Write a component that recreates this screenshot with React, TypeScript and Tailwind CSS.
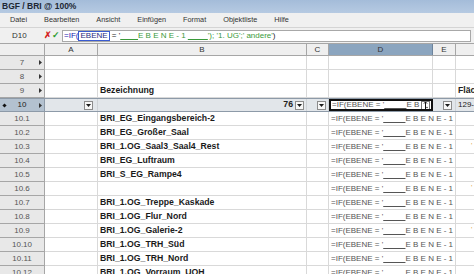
import React from 'react';

type Row = {
  id: string;
  name?: string;
  arrow?: boolean;
  formula?: boolean;
  f?: string;
  fBold?: boolean;
  mark?: boolean;
};

const rows: Row[] = [
  { id: '7', arrow: true },
  { id: '8', arrow: true },
  { id: '9', arrow: true, name: 'Bezeichnung', f: 'Fläc', fBold: true },
  { id: '10.1', name: 'BRI_EG_Eingangsbereich-2', formula: true },
  { id: '10.2', name: 'BRI_EG_Großer_Saal', formula: true },
  { id: '10.3', name: 'BRI_1.OG_Saal3_Saal4_Rest', formula: true, mark: true },
  { id: '10.4', name: 'BRI_EG_Luftraum', formula: true },
  { id: '10.5', name: 'BRI_S_EG_Rampe4', formula: true },
  { id: '10.6', formula: true, mark: true },
  { id: '10.7', name: 'BRI_1.OG_Treppe_Kaskade', formula: true },
  { id: '10.8', name: 'BRI_1.OG_Flur_Nord', formula: true },
  { id: '10.9', name: 'BRI_1.OG_Galerie-2', formula: true, mark: true },
  { id: '10.10', name: 'BRI_1.OG_TRH_Süd', formula: true },
  { id: '10.11', name: 'BRI_1.OG_TRH_Nord', formula: true },
  { id: '10.12', name: 'BRI_1.OG_Vorraum_UOH', formula: true },
];

const menu = ['Datei', 'Bearbeiten', 'Ansicht', 'Einfügen', 'Format', 'Objektliste', 'Hilfe'];

// little combo button used in the filter row
const Drop = () => (
  <span className="flex h-[9px] w-[9px] shrink-0 items-center justify-center border border-[#8c8c8c] bg-[#f7f7f7]">
    <svg width="5" height="3" viewBox="0 0 5 3">
      <path d="M0 0h5L2.5 3z" fill="#1a1a1a" />
    </svg>
  </span>
);

const Arrow = () => (
  <svg width="3" height="5" viewBox="0 0 3 5" className="absolute right-[2px] top-[4px]">
    <path d="M0 0l3 2.5L0 5z" fill="#333" />
  </svg>
);

const FormulaCell = () => (
  <span className="whitespace-pre text-[#555]">
    =IF(EBENE = '<span className="underline decoration-[#555]">{'          '}</span>E B E N E - 1
  </span>
);

export default function App() {
  return (
    <div className="h-[274px] w-[474px] overflow-hidden bg-white font-['Liberation_Sans',Arial,sans-serif] text-[8px] text-[#222]">
      {/* title bar */}
      <div className="flex h-[13px] items-center bg-gradient-to-b from-[#a4bcd9] to-[#b6cae2] pl-[2px] text-[8.5px] font-bold text-[#1d2733]">
        BGF / BRI @ 100%
      </div>

      {/* menu */}
      <div className="flex h-[15px] items-center gap-[17px] border-b border-[#d4d4d4] bg-[#f0f0f0] pl-[10px] text-[7.3px] text-[#333]">
        {menu.map((m) => (
          <span key={m}>{m}</span>
        ))}
      </div>

      {/* formula bar */}
      <div className="flex h-[15px] items-center bg-[#f0f0f0]">
        <span className="w-[44px] pl-[12px] text-[#333]">D10</span>
        <span className="w-[8px] text-[9px] font-bold leading-none text-[#d42020]">✗</span>
        <span className="w-[10px] text-[9px] font-bold leading-none text-[#2c9a2c]">✓</span>
        <div className="mr-[3px] flex h-[12px] flex-1 items-center overflow-hidden whitespace-pre border border-[#a8a8a8] bg-white pl-[1px] text-[8px]">
          <span className="text-[#2323b0]">=IF(</span>
          <span className="border border-[#3a5bd0] px-[1px] leading-[8px] text-[#1f2a80]">EBENE</span>
          <span className="text-[#222]"> = '</span>
          <span className="text-[#3a9a3a]">
            <span className="underline">{'        '}</span>E B E N E - 1 <span className="underline">{'         '}</span>'); '1. UG';' andere'
          </span>
          <span className="text-[#222]">)</span>
        </div>
      </div>

      {/* column headers */}
      <div className="flex h-[13px] border-y border-[#a6a6a6] bg-[#efefef] text-[8px] text-[#333]">
        <div className="w-[45px] border-r border-[#a6a6a6]" />
        <div className="flex w-[53px] items-center justify-center border-r border-[#a6a6a6]">A</div>
        <div className="flex w-[209px] items-center justify-center border-r border-[#a6a6a6]">B</div>
        <div className="flex w-[22px] items-center justify-center border-r border-[#a6a6a6]">C</div>
        <div className="flex w-[104px] items-center justify-center border-r border-[#6d849c] bg-[#8ba5bf]">D</div>
        <div className="flex w-[23px] items-center justify-center border-r border-[#a6a6a6]">E</div>
        <div className="flex-1" />
      </div>

      {/* rows */}
      {rows.slice(0, 3).map((r) => (
        <DataRow key={r.id} r={r} />
      ))}

      {/* active filter row 10 */}
      <div className="flex h-[14px] border-y border-[#8d9aa8] bg-[#e2e6ea]">
        <div className="relative flex w-[45px] items-center justify-center border-r border-[#8d9aa8] bg-[#b3c1cf] text-[#222]">
          <span className="absolute left-[3px] top-[5px] h-[3px] w-[3px] rotate-45 bg-[#111]" />
          10
          <Arrow />
        </div>
        <div className="flex w-[53px] items-center justify-end border-r border-[#cfd3d7] pr-[4px]">
          <Drop />
        </div>
        <div className="flex w-[209px] items-center justify-end gap-[2px] border-r border-[#cfd3d7] pr-[2px] text-[8.7px] font-bold">
          76
          <Drop />
        </div>
        <div className="flex w-[22px] items-center justify-end border-r border-[#cfd3d7] pr-[2px]">
          <Drop />
        </div>
        <div className="flex w-[104px] items-center overflow-hidden border-2 border-[#111] bg-white pl-[1px] text-[8px]">
          <span className="flex-1 overflow-hidden">
            <FormulaCell />
          </span>
          <span className="mr-[1px] flex h-[9px] w-[9px] shrink-0 items-center justify-center border border-[#777] bg-white">
            <svg width="5" height="7" viewBox="0 0 5 7">
              <path d="M2.5 0v7M1 1.5l1.5-1.5 1.5 1.5" stroke="#111" fill="none" strokeWidth="1" />
              <circle cx="4" cy="5.5" r="0.7" fill="#111" />
            </svg>
          </span>
        </div>
        <div className="flex w-[23px] items-center justify-end border-r border-[#cfd3d7] pr-[3px]">
          <Drop />
        </div>
        <div className="flex flex-1 items-center overflow-hidden whitespace-nowrap pl-[2px]">129-</div>
      </div>

      {rows.slice(3).map((r) => (
        <DataRow key={r.id} r={r} />
      ))}
    </div>
  );
}

const DataRow = ({ r }: { r: Row }) => (
  <div className="flex h-[14px] border-b border-[#d9d9d9]">
    <div className="relative -mb-px flex w-[45px] items-center justify-center border-r border-b border-[#a6a6a6] bg-[#e8e8e8] text-[#555]">
      {r.id}
      {r.arrow && <Arrow />}
    </div>
    <div className="w-[53px] border-r border-[#d9d9d9]" />
    <div className="flex w-[209px] items-center overflow-hidden whitespace-nowrap border-r border-[#d9d9d9] pl-[2px] text-[8.7px] font-bold text-[#1a1a1a]">
      {r.name}
    </div>
    <div className="w-[22px] border-r border-[#d9d9d9]" />
    {r.formula ? (
      <div className="flex w-[127px] items-center overflow-hidden whitespace-nowrap border-r border-[#d9d9d9] pl-[2px]">
        <FormulaCell />
      </div>
    ) : (
      <>
        <div className="w-[104px] border-r border-[#d9d9d9]" />
        <div className="w-[23px] border-r border-[#d9d9d9]" />
      </>
    )}
    <div className={`flex flex-1 items-center overflow-hidden whitespace-nowrap pl-[2px] ${r.fBold ? 'text-[8.7px] font-bold' : ''}`}>
      {r.f}
      {r.mark && <span className="ml-[13px] text-[7px] text-[#e0a040]">'</span>}
    </div>
  </div>
);
